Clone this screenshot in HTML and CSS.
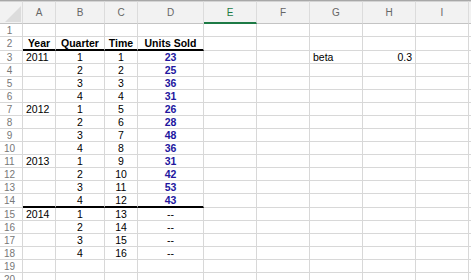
FILE: index.html
```html
<!DOCTYPE html>
<html lang="en">
<head>
  <meta charset="UTF-8" />
  <title>Units Sold</title>
  <link rel="stylesheet" href="styles.css">
</head>
<body>

  <div class="sheet">
    <div class="row head">
      <div class="cell corner">
        <svg width="22" height="22" viewBox="0 0 22 22"><polygon points="5,21 21,5 21,21" fill="#dcdcdc"/></svg>
      </div>
      <div class="cell col">A</div>
      <div class="cell col">B</div>
      <div class="cell col">C</div>
      <div class="cell col">D</div>
      <div class="cell col active">E</div>
      <div class="cell col">F</div>
      <div class="cell col">G</div>
      <div class="cell col">H</div>
      <div class="cell col">I</div>
      <div class="cell col"></div>
    </div>

    <div class="row"><div class="cell num">1</div><div class="cell"></div><div class="cell"></div><div class="cell"></div><div class="cell"></div><div class="cell"></div><div class="cell"></div><div class="cell"></div><div class="cell"></div><div class="cell"></div><div class="cell"></div></div>

    <div class="row rule">
      <div class="cell num">2</div>
      <div class="cell th">Year</div>
      <div class="cell th">Quarter</div>
      <div class="cell th">Time</div>
      <div class="cell th">Units Sold</div>
      <div class="cell"></div><div class="cell"></div><div class="cell"></div><div class="cell"></div><div class="cell"></div><div class="cell"></div>
    </div>

    <div class="row">
      <div class="cell num">3</div>
      <div class="cell">2011</div><div class="cell mid">1</div><div class="cell mid">1</div><div class="cell units">23</div>
      <div class="cell"></div><div class="cell"></div><div class="cell">beta</div><div class="cell right">0.3</div><div class="cell"></div><div class="cell"></div>
    </div>
    <div class="row">
      <div class="cell num">4</div>
      <div class="cell"></div><div class="cell mid">2</div><div class="cell mid">2</div><div class="cell units">25</div>
      <div class="cell"></div><div class="cell"></div><div class="cell"></div><div class="cell"></div><div class="cell"></div><div class="cell"></div>
    </div>
    <div class="row">
      <div class="cell num">5</div>
      <div class="cell"></div><div class="cell mid">3</div><div class="cell mid">3</div><div class="cell units">36</div>
      <div class="cell"></div><div class="cell"></div><div class="cell"></div><div class="cell"></div><div class="cell"></div><div class="cell"></div>
    </div>
    <div class="row">
      <div class="cell num">6</div>
      <div class="cell"></div><div class="cell mid">4</div><div class="cell mid">4</div><div class="cell units">31</div>
      <div class="cell"></div><div class="cell"></div><div class="cell"></div><div class="cell"></div><div class="cell"></div><div class="cell"></div>
    </div>
    <div class="row">
      <div class="cell num">7</div>
      <div class="cell">2012</div><div class="cell mid">1</div><div class="cell mid">5</div><div class="cell units">26</div>
      <div class="cell"></div><div class="cell"></div><div class="cell"></div><div class="cell"></div><div class="cell"></div><div class="cell"></div>
    </div>
    <div class="row">
      <div class="cell num">8</div>
      <div class="cell"></div><div class="cell mid">2</div><div class="cell mid">6</div><div class="cell units">28</div>
      <div class="cell"></div><div class="cell"></div><div class="cell"></div><div class="cell"></div><div class="cell"></div><div class="cell"></div>
    </div>
    <div class="row">
      <div class="cell num">9</div>
      <div class="cell"></div><div class="cell mid">3</div><div class="cell mid">7</div><div class="cell units">48</div>
      <div class="cell"></div><div class="cell"></div><div class="cell"></div><div class="cell"></div><div class="cell"></div><div class="cell"></div>
    </div>
    <div class="row">
      <div class="cell num">10</div>
      <div class="cell"></div><div class="cell mid">4</div><div class="cell mid">8</div><div class="cell units">36</div>
      <div class="cell"></div><div class="cell"></div><div class="cell"></div><div class="cell"></div><div class="cell"></div><div class="cell"></div>
    </div>
    <div class="row">
      <div class="cell num">11</div>
      <div class="cell">2013</div><div class="cell mid">1</div><div class="cell mid">9</div><div class="cell units">31</div>
      <div class="cell"></div><div class="cell"></div><div class="cell"></div><div class="cell"></div><div class="cell"></div><div class="cell"></div>
    </div>
    <div class="row">
      <div class="cell num">12</div>
      <div class="cell"></div><div class="cell mid">2</div><div class="cell mid">10</div><div class="cell units">42</div>
      <div class="cell"></div><div class="cell"></div><div class="cell"></div><div class="cell"></div><div class="cell"></div><div class="cell"></div>
    </div>
    <div class="row">
      <div class="cell num">13</div>
      <div class="cell"></div><div class="cell mid">3</div><div class="cell mid">11</div><div class="cell units">53</div>
      <div class="cell"></div><div class="cell"></div><div class="cell"></div><div class="cell"></div><div class="cell"></div><div class="cell"></div>
    </div>
    <div class="row rule">
      <div class="cell num">14</div>
      <div class="cell"></div><div class="cell mid">4</div><div class="cell mid">12</div><div class="cell units">43</div>
      <div class="cell"></div><div class="cell"></div><div class="cell"></div><div class="cell"></div><div class="cell"></div><div class="cell"></div>
    </div>
    <div class="row">
      <div class="cell num">15</div>
      <div class="cell">2014</div><div class="cell mid">1</div><div class="cell mid">13</div><div class="cell mid">--</div>
      <div class="cell"></div><div class="cell"></div><div class="cell"></div><div class="cell"></div><div class="cell"></div><div class="cell"></div>
    </div>
    <div class="row">
      <div class="cell num">16</div>
      <div class="cell"></div><div class="cell mid">2</div><div class="cell mid">14</div><div class="cell mid">--</div>
      <div class="cell"></div><div class="cell"></div><div class="cell"></div><div class="cell"></div><div class="cell"></div><div class="cell"></div>
    </div>
    <div class="row">
      <div class="cell num">17</div>
      <div class="cell"></div><div class="cell mid">3</div><div class="cell mid">15</div><div class="cell mid">--</div>
      <div class="cell"></div><div class="cell"></div><div class="cell"></div><div class="cell"></div><div class="cell"></div><div class="cell"></div>
    </div>
    <div class="row">
      <div class="cell num">18</div>
      <div class="cell"></div><div class="cell mid">4</div><div class="cell mid">16</div><div class="cell mid">--</div>
      <div class="cell"></div><div class="cell"></div><div class="cell"></div><div class="cell"></div><div class="cell"></div><div class="cell"></div>
    </div>
    <div class="row"><div class="cell num">19</div><div class="cell"></div><div class="cell"></div><div class="cell"></div><div class="cell"></div><div class="cell"></div><div class="cell"></div><div class="cell"></div><div class="cell"></div><div class="cell"></div><div class="cell"></div></div>
    <div class="row"><div class="cell num">20</div><div class="cell"></div><div class="cell"></div><div class="cell"></div><div class="cell"></div><div class="cell"></div><div class="cell"></div><div class="cell"></div><div class="cell"></div><div class="cell"></div><div class="cell"></div></div>
  </div>

</body>
</html>
```

FILE: styles.css
```css
body {
  margin: 0;
  background-color: #fff;
  font-family: 'Liberation Sans', Arial, sans-serif;
  color: #000;
  overflow: hidden;
}

.sheet {
  width: 471px;
  overflow: hidden;
  border-top: 1px solid #a8a8a8;
}

.row {
  display: grid;
  grid-template-columns: 23px 33px 49px 33px 66px 53px 53px 53px 53px 53px 53px;
  height: 13px;
}

.cell {
  box-sizing: border-box;
  border-right: 1px solid #d8d8d8;
  border-bottom: 1px solid #d8d8d8;
  padding: 0 3px;
  font-size: 10.5px;
  line-height: 13px;
  white-space: nowrap;
  overflow: hidden;
}

/* column headers */
.row.head {
  height: 23px;
}

.head .cell {
  background-color: #f2f2f2;
  border-top: 1px solid #d4d4d4;
  border-right-color: #dcdcdc;
  border-bottom-color: #c4c4c4;
  color: #666;
  font-size: 10px;
  line-height: 21px;
  text-align: center;
}

.head .corner {
  padding: 0;
  display: flex;
  align-items: flex-end;
  justify-content: flex-end;
}

.head .corner svg {
  display: block;
}

.head .active {
  color: #1d7a45;
  border-bottom: 2px solid #1d7a45;
}

/* row numbers */
.num {
  padding: 0 3px 0 0;
  color: #777;
  font-size: 10px;
  text-align: center;
}

/* thick rule under headers and under 2013 */
.row.rule {
  height: 14px;
}

.rule .cell:nth-child(n+2):nth-child(-n+5) {
  border-bottom: 2px solid #000;
}

.th {
  font-weight: bold;
  text-align: center;
}

.mid {
  text-align: center;
}

.right {
  text-align: right;
}

.units {
  text-align: center;
  font-weight: bold;
  color: #22169e;
}
```
